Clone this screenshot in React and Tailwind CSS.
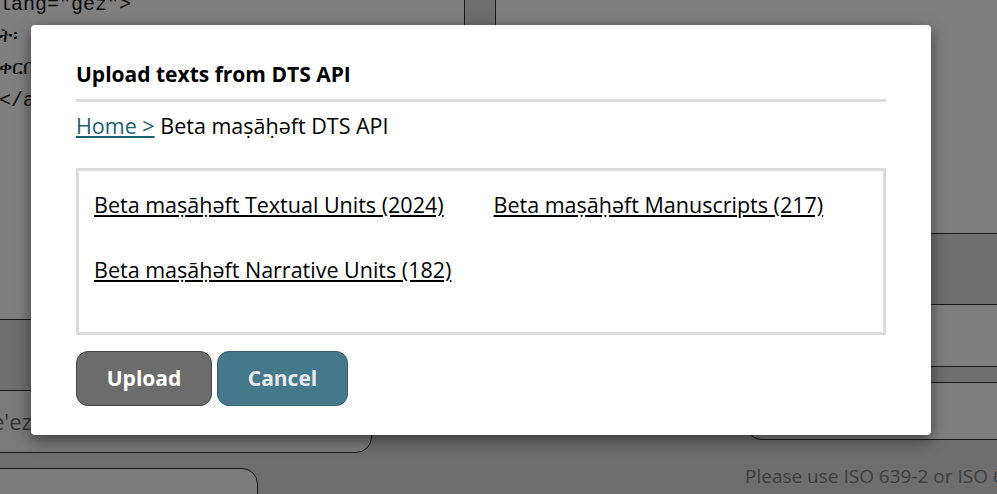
import { useState } from "react";

const links = [
  { label: "Beta maṣāḥəft Textual Units (2024)" },
  { label: "Beta maṣāḥəft Manuscripts (217)" },
  { label: "Beta maṣāḥəft Narrative Units (182)" },
];

const codeLines = [
  'lang="gez">',
  "ት፡ ወእምድኅረ፡ ዝንቱ፡ ተንሥአ፡ ንጉሥ፡",
  "ቀርበ፡ ኀበ፡ ቤተ፡ ክርስቲያን፡",
  "</ab>",
];

function EditorBackdrop() {
  return (
    <div className="flex h-full w-full">
      {/* left: text editor + language field */}
      <div className="flex w-[497px] shrink-0 flex-col">
        <div className="flex h-[320px] shrink-0 border-b border-[#333]">
          <div className="w-[465px] overflow-hidden border-r border-[#333] bg-white font-['Liberation_Mono','DejaVu_Sans_Mono',monospace] text-[20px] leading-[32px] text-[#151515]">
            <div className="-mt-[11px] -ml-[1px]">
              {codeLines.map((line) => (
                <div key={line} className="whitespace-pre">
                  {line}
                </div>
              ))}
            </div>
          </div>
          <div className="w-[31px] border-r border-[#333] bg-[#dcdcdc]"></div>
        </div>
        <div className="flex flex-1 flex-col bg-[#dcdcdc] pt-[70px]">
          <div className="-ml-[31px] flex h-[63px] w-[403px] shrink-0 items-center rounded-br-[16px] border border-[#333] bg-[#f5f5f5] pl-[6px] text-[22px] text-[#666]">
            Ge'ez
          </div>
          <div className="-ml-[30px] mt-[15px] h-[40px] w-[288px] shrink-0 rounded-tr-[16px] border border-[#333] bg-[#f5f5f5]"></div>
        </div>
      </div>

      {/* right: metadata form */}
      <div className="flex flex-1 flex-col">
        <div className="h-[233px] shrink-0 bg-white"></div>
        <div className="h-[72px] shrink-0 border-y border-[#333] bg-[#dcdcdc]"></div>
        <div className="h-[61px] shrink-0 bg-white"></div>
        <div className="h-[17px] shrink-0 border-y border-[#333] bg-[#dcdcdc]"></div>
        <div className="flex flex-1 flex-col bg-[#dcdcdc]">
          <div className="ml-[249px] h-[57px] shrink-0 rounded-bl-[16px] border-b border-l border-[#333] bg-white"></div>
          <p className="ml-[248px] mt-[22px] whitespace-nowrap text-[19px] text-[#808080]">
            Please use ISO 639-2 or ISO 639-3 language codes
          </p>
        </div>
      </div>
    </div>
  );
}

export default function App() {
  const [selected, setSelected] = useState(null);

  return (
    <div className="relative h-[494px] w-[997px] overflow-hidden bg-white font-['Open_Sans','Noto_Sans',sans-serif]">
      <EditorBackdrop />

      {/* backdrop */}
      <div className="absolute inset-0 bg-black/50"></div>

      {/* dialog */}
      <div className="absolute left-[31px] top-[25px] w-[900px] rounded-[4px] bg-white px-[45px] pb-[29px] pt-[34px] shadow-[0_5px_15px_rgba(0,0,0,0.5)]">
        <h2 className="text-[21px] font-bold leading-[30px] text-black">
          Upload texts from DTS API
        </h2>
        <div className="mt-[10px] h-[3px] w-full bg-[#dcdcdc]"></div>

        <div className="mt-[9px] text-[21.5px] leading-[30px] text-black">
          <a href="#" className="text-[#1c5f6d] underline">
            Home &gt;
          </a>{" "}
          Beta maṣāḥəft DTS API
        </div>

        <div className="mt-[27px] flex flex-wrap gap-x-[50px] gap-y-[35px] border-[3px] border-[#dcdcdc] px-[15px] pb-[47px] pt-[19px]">
          {links.map((link, index) => (
            <a
              key={link.label}
              href="#"
              onClick={(e) => {
                e.preventDefault();
                setSelected(index);
              }}
              className={
                "text-[21.5px] leading-[30px] text-black underline " +
                (selected === index ? "font-bold" : "")
              }
            >
              {link.label}
            </a>
          ))}
        </div>

        <div className="mt-[16px] flex gap-[5px]">
          <button className="h-[55px] w-[136px] rounded-[12px] border border-[#444] bg-[#6c6c6c] text-[21px] font-bold text-white">
            Upload
          </button>
          <button className="h-[55px] w-[131px] rounded-[12px] border border-[#3a5e6c] bg-[#46788c] text-[21px] font-bold text-[#e6ecee]">
            Cancel
          </button>
        </div>
      </div>
    </div>
  );
}
